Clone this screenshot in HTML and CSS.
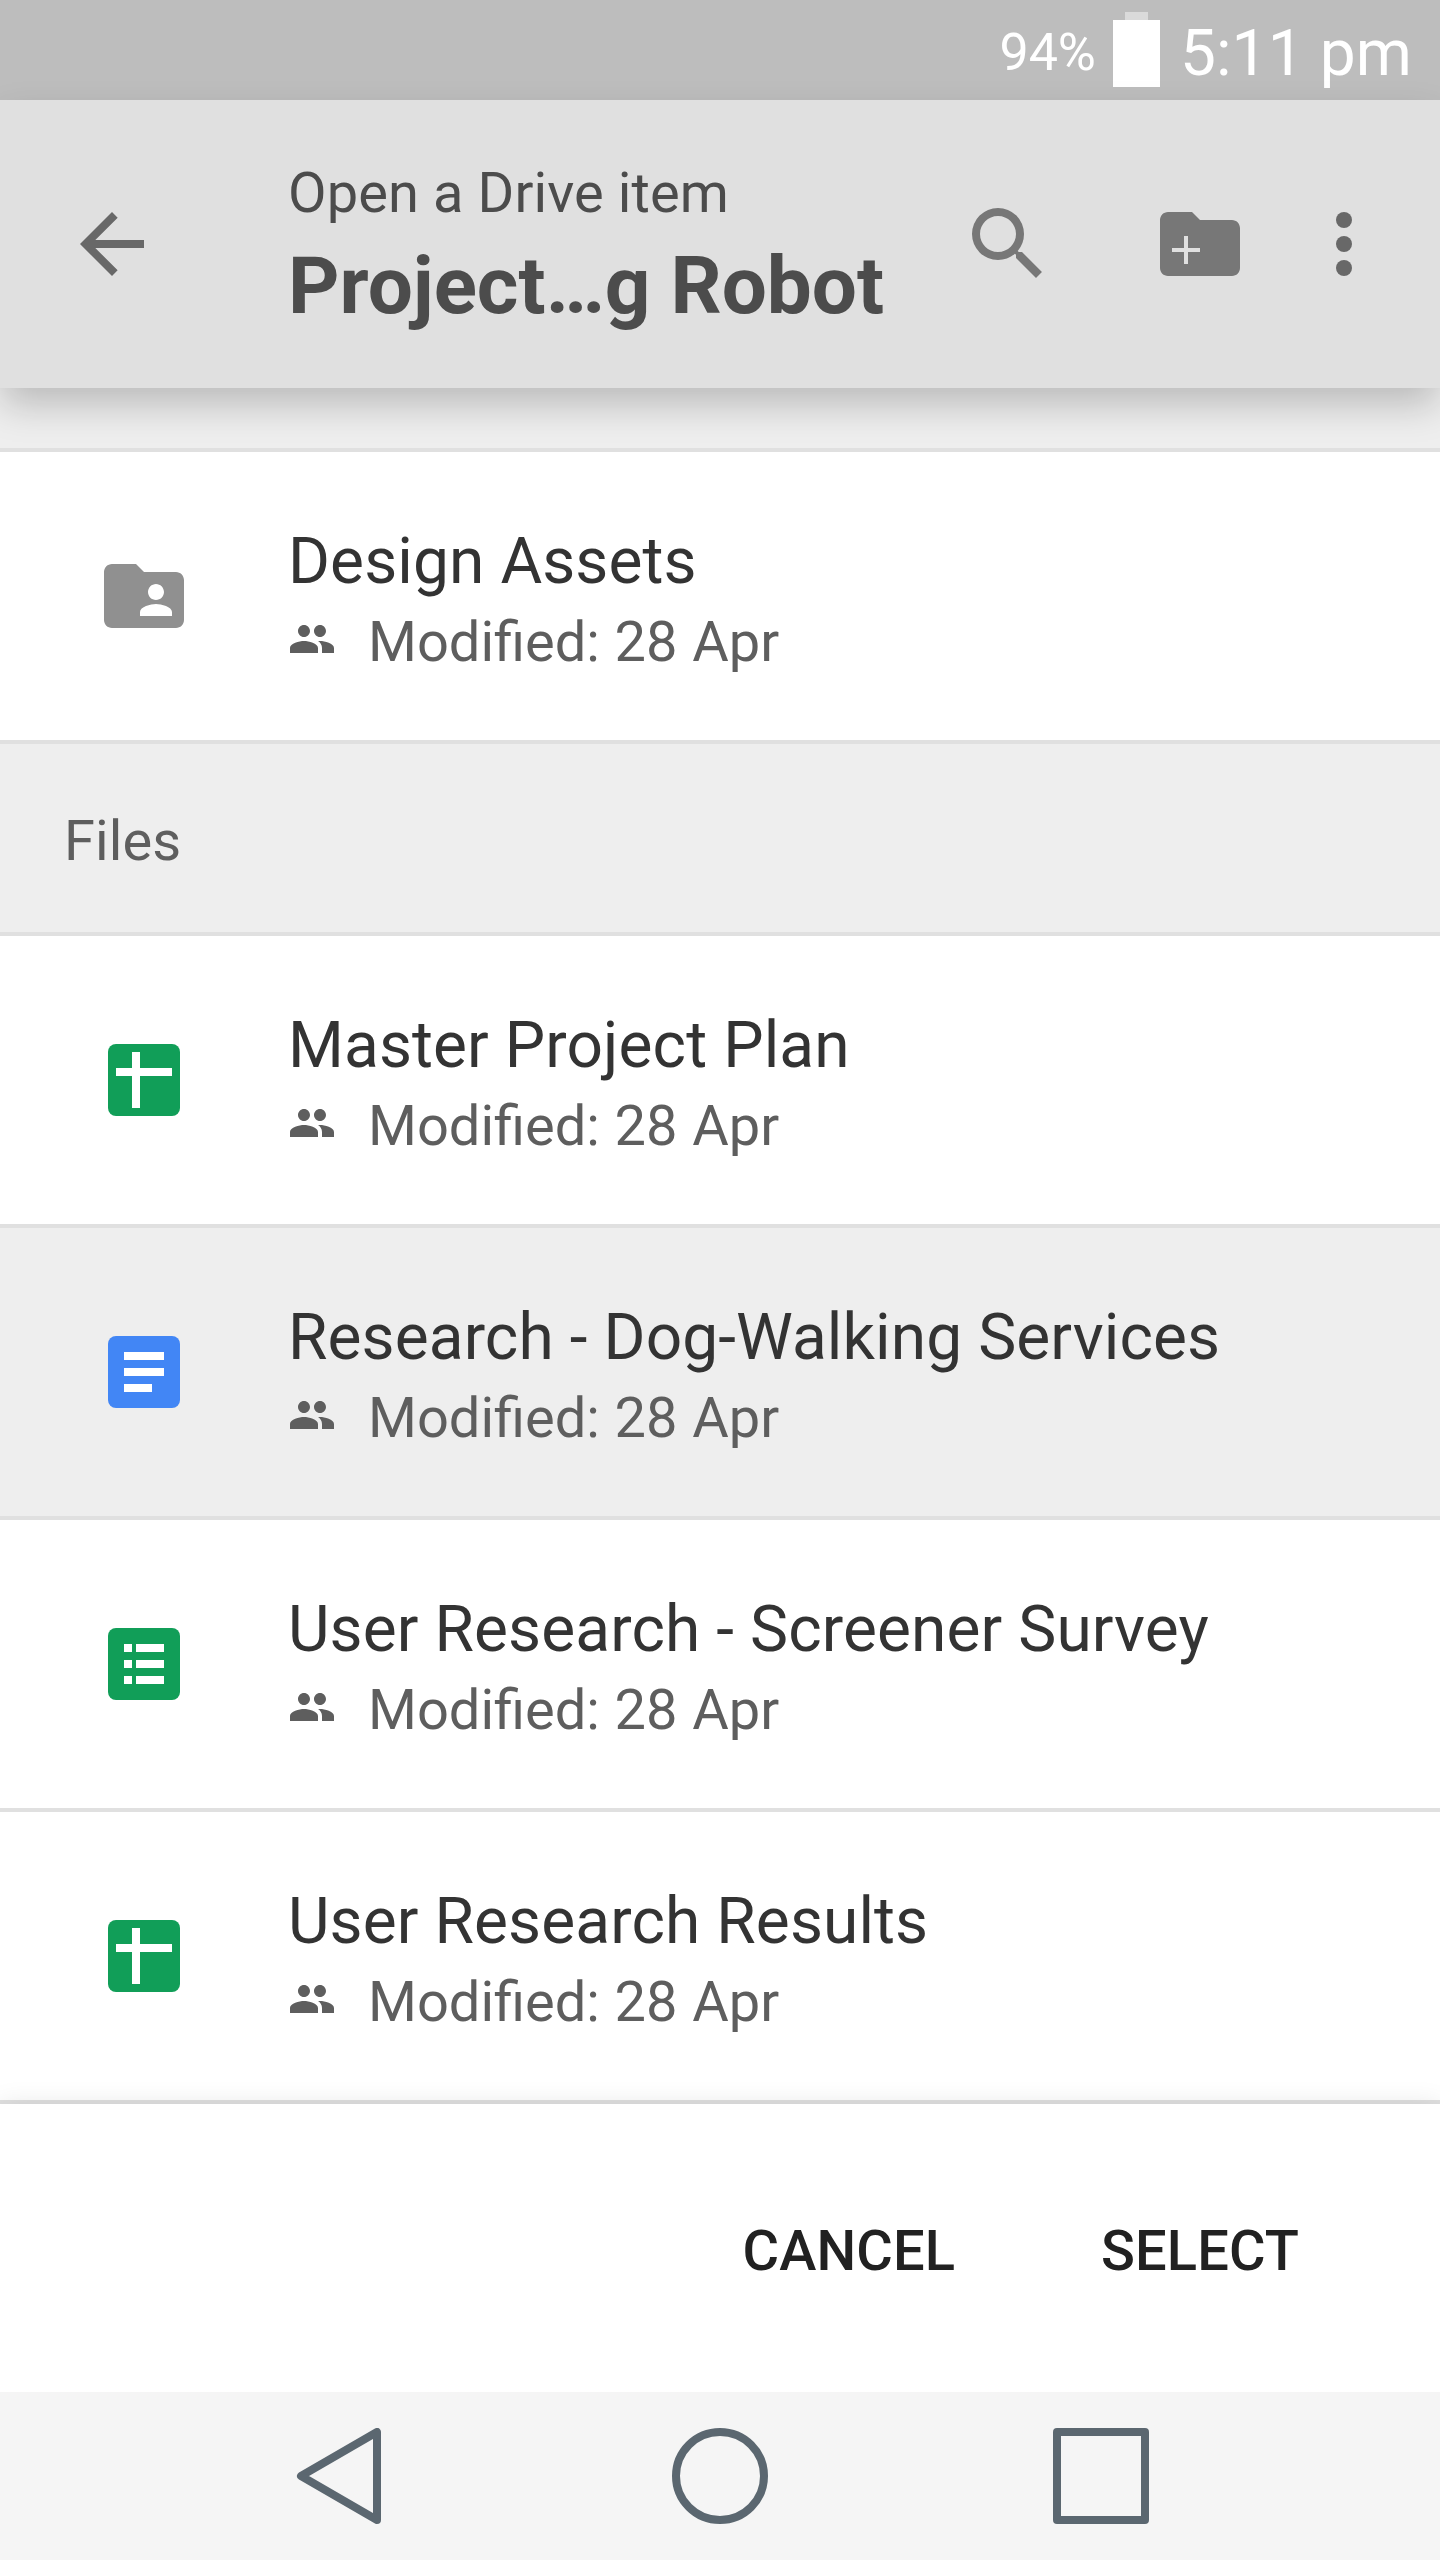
FILE: index.html
```html
<!DOCTYPE html>
<html lang="en">
<head>
<meta charset="utf-8">
<title>Open a Drive item</title>
<link rel="stylesheet" href="styles.css">
</head>
<body>
<svg class="defs" aria-hidden="true">
  <symbol id="people" viewBox="0 0 24 24"><path d="M16 11c1.66 0 2.99-1.34 2.99-3S17.66 5 16 5c-1.66 0-3 1.34-3 3s1.34 3 3 3zm-8 0c1.66 0 2.99-1.34 2.99-3S9.66 5 8 5C6.34 5 5 6.34 5 8s1.34 3 3 3zm0 2c-2.33 0-7 1.17-7 3.5V19h14v-2.5c0-2.33-4.67-3.500-7-3.500zm8 0c-.29 0-.62.020-.97.050 1.160.840 1.970 1.970 1.970 3.450V19h6v-2.500c0-2.330-4.670-3.500-7-3.500z"/></symbol>
  <symbol id="sheet" viewBox="0 0 24 24"><rect x="3" y="3" width="18" height="18" rx="2" fill="#119e58"/><path fill="#fff" d="M9 5h2v4h8v2h-8v8H9v-8H5V9h4z"/></symbol>
</svg>
<div class="screen">
  <div class="status">
    <span class="percent">94%</span>
    <svg class="battery" width="47" height="75" viewBox="0 0 47 75"><rect x="12" width="23" height="8" fill="#dadada"/><rect y="8" width="47" height="67" fill="#fff"/></svg>
    <span class="clock">5:11 pm</span>
  </div>
  <header class="appbar">
    <svg class="icon dark" viewBox="0 0 24 24"><path d="M20 11H7.830l5.590-5.590L12 4l-8 8 8 8 1.410-1.410L7.830 13H20z"/></svg>
    <div class="heading">
      <div class="subtitle">Open a Drive item</div>
      <h1 class="title">Project…g Robot</h1>
    </div>
    <svg class="icon search" viewBox="0 0 24 24"><path d="M15.500 14h-.790l-.280-.270A6.471 6.471 0 0 0 16 9.500 6.500 6.500 0 1 0 9.500 16c1.610 0 3.090-.590 4.230-1.570l.270.280v.790l5 4.990L20.490 19zm-6 0C7.010 14 5 11.990 5 9.500S7.010 5 9.500 5 14 7.010 14 9.500 11.990 14 9.500 14z"/></svg>
    <svg class="icon newfolder" viewBox="0 0 24 24"><path d="M20 6h-8l-2-2H4c-1.100 0-2 .9-2 2v12c0 1.100.9 2 2 2h16c1.100 0 2-.9 2-2V8c0-1.100-.9-2-2-2z"/><path fill="#e0e0e0" d="M8 10h1v3h3v1H9v3H8v-3H5v-1h3z"/></svg>
    <svg class="icon dark more" viewBox="0 0 24 24"><circle cx="12" cy="6" r="2"/><circle cx="12" cy="12" r="2"/><circle cx="12" cy="18" r="2"/></svg>
  </header>
  <main class="list">
    <div class="section top"></div>
    <div class="row">
      <svg class="icon folder" viewBox="0 0 24 24"><path d="M20 6h-8l-2-2H4c-1.100 0-2 .9-2 2v12c0 1.100.9 2 2 2h16c1.100 0 2-.9 2-2V8c0-1.100-.9-2-2-2zm-5 3c1.100 0 2 .9 2 2s-.9 2-2 2-2-.9-2-2 .9-2 2-2zm4 8h-8v-1c0-1.330 2.670-2 4-2s4 .67 4 2z"/></svg>
      <div class="info"><div class="name">Design Assets</div><div class="meta"><svg class="people"><use href="#people"/></svg><span>Modified: 28 Apr</span></div></div>
    </div>
    <div class="section files">Files</div>
    <div class="row">
      <svg class="icon"><use href="#sheet"/></svg>
      <div class="info"><div class="name">Master Project Plan</div><div class="meta"><svg class="people"><use href="#people"/></svg><span>Modified: 28 Apr</span></div></div>
    </div>
    <div class="row selected">
      <svg class="icon" viewBox="0 0 24 24"><rect x="3" y="3" width="18" height="18" rx="2" fill="#4286f5"/><path fill="#fff" d="M7 7h10v2H7zM7 11h10v2H7zM7 15h7v2H7z"/></svg>
      <div class="info"><div class="name">Research - Dog-Walking Services</div><div class="meta"><svg class="people"><use href="#people"/></svg><span>Modified: 28 Apr</span></div></div>
    </div>
    <div class="row">
      <svg class="icon" viewBox="0 0 24 24"><rect x="3" y="3" width="18" height="18" rx="2" fill="#119e58"/><path fill="#fff" d="M7 7h2v2H7zM10 7h7v2h-7zM7 11h2v2H7zM10 11h7v2h-7zM7 15h2v2H7zM10 15h7v2h-7z"/></svg>
      <div class="info"><div class="name">User Research - Screener Survey</div><div class="meta"><svg class="people"><use href="#people"/></svg><span>Modified: 28 Apr</span></div></div>
    </div>
    <div class="row">
      <svg class="icon"><use href="#sheet"/></svg>
      <div class="info"><div class="name">User Research Results</div><div class="meta"><svg class="people"><use href="#people"/></svg><span>Modified: 28 Apr</span></div></div>
    </div>
  </main>
  <footer class="actions">
    <button class="action">CANCEL</button>
    <button class="action">SELECT</button>
  </footer>
  <nav class="nav">
    <svg class="navicon" viewBox="0 0 96 96"><path d="M10 48L86 4v88z"/></svg>
    <svg class="navicon" viewBox="0 0 96 96"><circle cx="48" cy="48" r="44"/></svg>
    <svg class="navicon" viewBox="0 0 96 96"><rect x="4" y="4" width="88" height="88"/></svg>
  </nav>
</div>
</body>
</html>
```
FILE: styles.css
```css
* { box-sizing: border-box; }
body { margin: 0; font-family: Roboto, sans-serif; background: #fff; }
svg { display: block; flex: none; }
.defs { width: 0; height: 0; position: absolute; }
.screen { width: 1440px; height: 2560px; display: flex; flex-direction: column; overflow: hidden; }

.status { height: 100px; background: #bdbdbd; color: #fff; display: flex; justify-content: flex-end; align-items: flex-start; padding-right: 28px; }
.percent { font-size: 52px; line-height: 60px; margin: 23px 17px 0 0; }
.battery { margin-top: 12px; }
.clock { font-size: 64px; line-height: 76px; margin: 16px 0 0 20px; letter-spacing: .1px; }

.appbar { height: 288px; background: #e0e0e0; display: flex; align-items: flex-start; padding: 0 48px 0 64px; position: relative; z-index: 1; box-shadow: 0 18px 36px -2px rgba(0, 0, 0, .22); }
.icon { width: 96px; height: 96px; fill: #777; }
.appbar .icon { margin-top: 96px; }
.appbar .dark { fill: #686868; }
.heading { width: 672px; margin-left: 128px; padding-top: 60px; color: #4c4c4c; white-space: nowrap; }
.subtitle { font-size: 56px; line-height: 66px; letter-spacing: .1px; }
.title { margin: 13px 0 0; font-size: 80px; line-height: 94px; font-weight: 700; }
.newfolder { margin-left: 96px; }
.more { margin-left: 48px; }

.section { background: #eee; border-bottom: 4px solid #e0e0e0; color: #5e5e5e; }
.top { height: 64px; }
.files { height: 192px; padding: 64px 64px 0; font-size: 56px; line-height: 66px; letter-spacing: .1px; }
.row { height: 292px; display: flex; align-items: flex-start; gap: 96px; padding-left: 96px; border-bottom: 4px solid #e0e0e0; background: #fff; }
.selected { background: #eee; }
.row .icon { margin-top: 96px; }
.row .folder { fill: #909090; }
.info { padding-top: 72px; white-space: nowrap; }
.name { font-size: 64px; line-height: 75px; letter-spacing: .1px; color: #333; }
.meta { display: flex; align-items: flex-start; gap: 32px; margin-top: 10px; font-size: 56px; line-height: 66px; word-spacing: .8px; color: #5e5e5e; }
.people { width: 48px; height: 48px; margin-top: 6px; fill: #5e5e5e; }

.actions { height: 288px; background: #fff; display: flex; justify-content: flex-end; align-items: flex-start; gap: 146px; padding: 114px 141px 0 0; position: relative; box-shadow: 0 0 24px rgba(0, 0, 0, .1); }
.action { border: 0; padding: 0; background: none; font: 500 56px/66px Roboto, sans-serif; letter-spacing: .1px; color: #212121; }

.nav { flex: 1; background: #f5f5f5; display: flex; align-items: center; justify-content: space-between; padding: 0 291px; position: relative; }
.navicon { width: 96px; height: 96px; fill: none; stroke: #5b6770; stroke-width: 8; stroke-linejoin: round; }
```
